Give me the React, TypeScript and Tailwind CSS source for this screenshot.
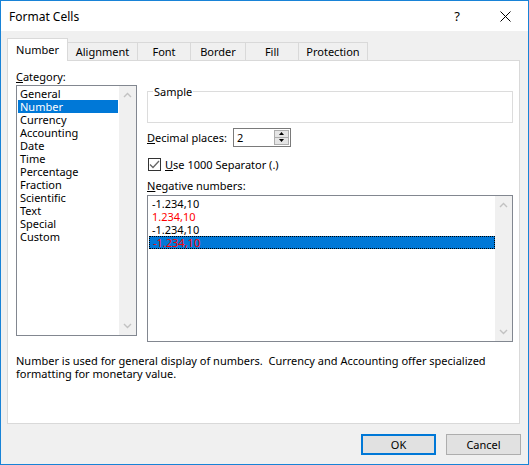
import React from "react";

const categories = [
  "General", "Number", "Currency", "Accounting", "Date", "Time",
  "Percentage", "Fraction", "Scientific", "Text", "Special", "Custom",
];

const negatives = [
  { text: "-1.234,10", red: false },
  { text: "1.234,10", red: true },
  { text: "-1.234,10", red: false },
  { text: "-1.234,10", red: true },
];

const tabs = [
  { name: "Number", w: "w-[61px]" },
  { name: "Alignment", w: "w-[70px]" },
  { name: "Font", w: "w-[53px]" },
  { name: "Border", w: "w-[55px]" },
  { name: "Fill", w: "w-[53px]" },
  { name: "Protection", w: "w-[69px]" },
];

function Chevron({ up }: { up?: boolean }) {
  return (
    <svg width="9" height="6" viewBox="0 0 9 6" className="text-[#c2c2c2]">
      <polyline
        points={up ? "1,5 4.5,1.5 8,5" : "1,1 4.5,4.5 8,1"}
        fill="none"
        stroke="currentColor"
        strokeWidth="1.4"
      />
    </svg>
  );
}

function ScrollBar() {
  return (
    <div className="w-[17px] bg-[#f0f0f0] flex flex-col items-center justify-between py-[6px]">
      <Chevron up />
      <Chevron />
    </div>
  );
}

export default function App() {
  return (
    <div
      className="w-[529px] h-[465px] border border-[#1883d7] bg-[#f0f0f0] flex flex-col text-[11px] leading-[13px] text-black whitespace-nowrap"
      style={{ fontFamily: '"Noto Sans", sans-serif' }}
    >
      {/* title bar */}
      <div className="h-[30px] bg-white flex items-center pl-[8px]">
        <span className="text-[12px]">Format Cells</span>
        <div className="ml-auto flex items-center">
          <span className="text-[13px] w-[46px] text-center mr-[2px]">?</span>
          <div className="w-[46px] flex justify-center">
            <svg width="11" height="11" viewBox="0 0 11 11">
              <path d="M0.5 0.5 L10.5 10.5 M10.5 0.5 L0.5 10.5" stroke="#000" strokeWidth="1" />
            </svg>
          </div>
        </div>
      </div>

      {/* tabs */}
      <div className="mt-[7px] ml-[6px] h-[22px] flex items-end">
        {tabs.map((t, i) =>
          i === 0 ? (
            <div
              key={t.name}
              className={`${t.w} h-[23px] -mb-px relative z-10 bg-white border border-b-0 border-[#d9d9d9] flex items-center justify-center pb-[2px]`}
            >
              {t.name}
            </div>
          ) : (
            <div
              key={t.name}
              className={`${t.w} h-[18px] bg-[#f0f0f0] border-t border-r border-[#d9d9d9] flex items-center justify-center`}
            >
              {t.name}
            </div>
          )
        )}
      </div>

      {/* panel */}
      <div className="ml-[6px] w-[513px] h-[364px] bg-white border border-[#d9d9d9] flex flex-col pl-[8px] pt-[9px]">
        <div className="flex gap-[10px]">
          {/* category column */}
          <div className="w-[121px] flex flex-col">
            <div>
              <span className="underline">C</span>ategory:
            </div>
            <div className="mt-[2px] h-[251px] border border-[#828790] flex">
              <div className="flex-1 pt-px px-px">
                {categories.map((c) => (
                  <div
                    key={c}
                    className={`h-[13px] pl-[2px] ${c === "Number" ? "bg-[#0078d7] text-white" : ""}`}
                  >
                    {c}
                  </div>
                ))}
              </div>
              <ScrollBar />
            </div>
          </div>

          {/* right column */}
          <div className="w-[366px] flex flex-col">
            <div className="mt-[21px] h-[32px] border border-[#dcdcdc] relative">
              <span className="absolute -top-[7px] left-[5px] bg-white px-px">Sample</span>
            </div>

            <div className="mt-[5px] flex items-center h-[19px]">
              <span className="w-[86px]">
                <span className="underline">D</span>ecimal places:
              </span>
              <div className="w-[58px] h-[19px] border border-[#7a7a7a] flex">
                <span className="flex-1 pl-[3px] leading-[17px]">2</span>
                <div className="w-[16px] flex flex-col py-px pr-px">
                  <div className="h-[8px] bg-[#e5e5e5] border border-[#adadad] flex items-center justify-center">
                    <svg width="5" height="3" viewBox="0 0 5 3"><path d="M0 3 L2.5 0 L5 3 Z" fill="#000" /></svg>
                  </div>
                  <div className="h-[8px] bg-[#e5e5e5] border border-[#adadad] border-t-0 flex items-center justify-center">
                    <svg width="5" height="3" viewBox="0 0 5 3"><path d="M0 0 L2.5 3 L5 0 Z" fill="#000" /></svg>
                  </div>
                </div>
              </div>
            </div>

            <div className="mt-[11px] flex items-center ml-px">
              <div className="w-[13px] h-[13px] border border-[#333] flex items-center justify-center bg-white">
                <svg width="11" height="9" viewBox="0 0 11 9">
                  <polyline points="1,4.5 4,7.5 10,1" fill="none" stroke="#666" strokeWidth="1.3" />
                </svg>
              </div>
              <span className="ml-[4px]">
                <span className="underline">U</span>se 1000 Separator (.)
              </span>
            </div>

            <div className="mt-[8px]">
              <span className="underline">N</span>egative numbers:
            </div>

            <div className="mt-[3px] h-[147px] border border-[#828790] flex">
              <div className="flex-1 pt-px pl-px">
                {negatives.map((n, i) => (
                  <div
                    key={i}
                    className={`h-[13px] pl-[3px] ${n.red ? "text-[#ff0000]" : ""} ${
                      i === 3 ? "bg-[#0078d7] border border-dotted border-black pl-[2px] leading-[11px]" : ""
                    }`}
                  >
                    {n.text}
                  </div>
                ))}
              </div>
              <ScrollBar />
            </div>
          </div>
        </div>

        <p className="mt-[12px] leading-[13px]">
          Number is used for general display of numbers.&nbsp; Currency and Accounting offer specialized
          <br />
          formatting for monetary value.
        </p>
      </div>

      {/* buttons */}
      <div className="mt-[10px] flex justify-end pr-[7px] gap-[10px]">
        <button className="w-[75px] h-[21px] bg-[#e1e1e1] border-2 border-[#0078d7]">OK</button>
        <button className="w-[75px] h-[21px] bg-[#e1e1e1] border border-[#adadad]">Cancel</button>
      </div>
    </div>
  );
}
